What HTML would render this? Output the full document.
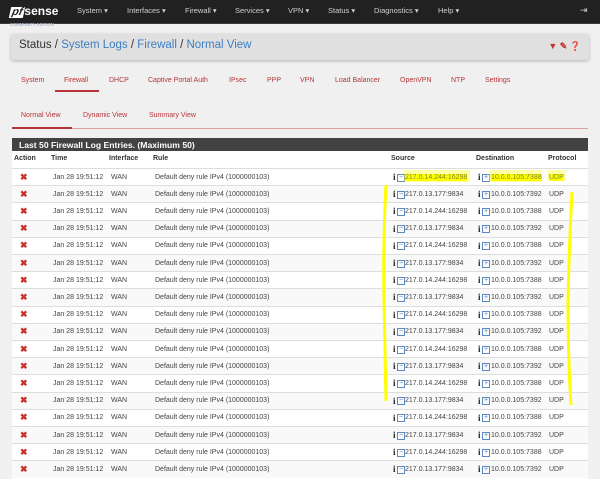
<!DOCTYPE html>
<html><head><meta charset="utf-8"><style>
*{margin:0;padding:0;box-sizing:border-box}
body{width:600px;height:479px;overflow:hidden;background:#f0f0f0;font-family:"Liberation Sans",sans-serif;position:relative}
.nav{position:absolute;left:0;top:0;width:600px;height:24px;background:#212121;border-bottom:1px solid #3a3a3a}
.nav span{position:absolute;top:6px;color:#cfcfcf;font-size:7.5px}
.logo{position:absolute;left:10px;top:2px;width:54px}
.logo b{display:inline-block;background:#fff;color:#212121;font-size:11px;font-style:italic;padding:0 2px;line-height:11px;transform:skewX(-12deg)}
.logo i{font-style:normal;color:#fff;font-weight:bold;font-size:12px;line-height:11px}
.logo small{display:block;color:#b0b8d0;font-size:4.2px;font-weight:bold;margin-top:2px;white-space:nowrap}
.bc{position:absolute;left:11px;top:34px;width:578px;height:26px;background:#e0e0e0;border-radius:3px;box-shadow:0 1px 3px rgba(0,0,0,.25);font-size:11.5px;color:#333;padding:5px 8px}
.bc a{color:#3d7fc1}
.tab{position:absolute;font-size:7px;color:#b53538}
.t1{top:77px}.t2{top:112px}
.abs{position:absolute}
.panel{position:absolute;left:12px;top:138px;width:576px;height:341px;background:#fff}
.ph{position:absolute;left:12px;top:138px;width:576px;height:13px;background:#424242;color:#fff;font-weight:bold;font-size:8.6px;padding:1.5px 7px}
.hd{position:absolute;top:155px;font-size:7px;font-weight:bold;color:#333}
.row{position:absolute;left:12px;width:576px;height:17.2px;border-top:1px solid #ddd;font-size:7px;color:#444}
.row.s{background:#f9f9f9}
.row span{position:absolute;top:4.5px}
.x{color:#c9302c;font-weight:bold;font-size:9px;top:2.5px!important;left:8px}
.ic{font-weight:bold;color:#222;font-family:"Liberation Serif",serif;font-size:9px;top:3px!important}
.bx{width:8px;height:8px;border:1px solid #5b89c4;top:4.5px!important;font-size:7px;line-height:6px;text-align:center;color:#5b89c4}
.hl{background:#ffff00}
</style></head><body>
<div class="nav">
<div class="logo"><b>pf</b><i>sense</i><small>COMMUNITY EDITION</small></div>
<span style="left:77px">System ▾</span>
<span style="left:127px">Interfaces ▾</span>
<span style="left:185px">Firewall ▾</span>
<span style="left:235px">Services ▾</span>
<span style="left:288px">VPN ▾</span>
<span style="left:328px">Status ▾</span>
<span style="left:374px">Diagnostics ▾</span>
<span style="left:438px">Help ▾</span>
<span style="left:580px;font-size:9px;top:5px">⇥</span>
</div>
<div class="bc">Status / <a>System Logs</a> / <a>Firewall</a> / <a>Normal View</a>
<span style="position:absolute;right:8px;top:7px;color:#c9302c;font-size:9px;font-weight:bold">▼ ✎ ❓</span></div>
<span class="tab t1" style="left:21px">System</span>
<span class="tab t1" style="left:64px">Firewall</span>
<div class="abs" style="left:55px;top:90px;width:44px;height:2px;background:#b53538"></div>
<span class="tab t1" style="left:109px">DHCP</span>
<span class="tab t1" style="left:148px">Captive Portal Auth</span>
<span class="tab t1" style="left:229px">IPsec</span>
<span class="tab t1" style="left:267px">PPP</span>
<span class="tab t1" style="left:300px">VPN</span>
<span class="tab t1" style="left:335px">Load Balancer</span>
<span class="tab t1" style="left:400px">OpenVPN</span>
<span class="tab t1" style="left:451px">NTP</span>
<span class="tab t1" style="left:485px">Settings</span>
<span class="tab t2" style="left:21px">Normal View</span>
<span class="tab t2" style="left:83px">Dynamic View</span>
<span class="tab t2" style="left:149px">Summary View</span>
<div class="abs" style="left:12px;top:128px;width:576px;height:1px;background:#d9a0a0"></div>
<div class="abs" style="left:12px;top:127px;width:60px;height:2px;background:#b53538"></div>
<div class="panel"></div>
<div class="ph">Last 50 Firewall Log Entries. (Maximum 50)</div>
<span class="hd" style="left:14px">Action</span>
<span class="hd" style="left:51px">Time</span>
<span class="hd" style="left:109px">Interface</span>
<span class="hd" style="left:153px">Rule</span>
<span class="hd" style="left:391px">Source</span>
<span class="hd" style="left:476px">Destination</span>
<span class="hd" style="left:548px">Protocol</span>
<div id="rows">
<div class="row" style="top:168px"><span class="x">✖</span><span style="left:41px">Jan 28 19:51:12</span><span style="left:99px">WAN</span><span style="left:143px">Default deny rule IPv4 (1000000103)</span><span class="ic" style="left:381px">i</span><span class="bx" style="left:385px">−</span><span style="left:393px" class="hl">217.0.14.244:16298</span><span class="ic" style="left:466px">i</span><span class="bx" style="left:470px">+</span><span class="hl" style="left:479px">10.0.0.105:7388</span><span class="hl" style="left:537px">UDP</span></div>
<div class="row s" style="top:185.2px"><span class="x">✖</span><span style="left:41px">Jan 28 19:51:12</span><span style="left:99px">WAN</span><span style="left:143px">Default deny rule IPv4 (1000000103)</span><span class="ic" style="left:381px">i</span><span class="bx" style="left:385px">−</span><span style="left:393px">217.0.13.177:9834</span><span class="ic" style="left:466px">i</span><span class="bx" style="left:470px">+</span><span style="left:479px">10.0.0.105:7392</span><span style="left:537px">UDP</span></div>
<div class="row" style="top:202.4px"><span class="x">✖</span><span style="left:41px">Jan 28 19:51:12</span><span style="left:99px">WAN</span><span style="left:143px">Default deny rule IPv4 (1000000103)</span><span class="ic" style="left:381px">i</span><span class="bx" style="left:385px">−</span><span style="left:393px">217.0.14.244:16298</span><span class="ic" style="left:466px">i</span><span class="bx" style="left:470px">+</span><span style="left:479px">10.0.0.105:7388</span><span style="left:537px">UDP</span></div>
<div class="row s" style="top:219.6px"><span class="x">✖</span><span style="left:41px">Jan 28 19:51:12</span><span style="left:99px">WAN</span><span style="left:143px">Default deny rule IPv4 (1000000103)</span><span class="ic" style="left:381px">i</span><span class="bx" style="left:385px">−</span><span style="left:393px">217.0.13.177:9834</span><span class="ic" style="left:466px">i</span><span class="bx" style="left:470px">+</span><span style="left:479px">10.0.0.105:7392</span><span style="left:537px">UDP</span></div>
<div class="row" style="top:236.8px"><span class="x">✖</span><span style="left:41px">Jan 28 19:51:12</span><span style="left:99px">WAN</span><span style="left:143px">Default deny rule IPv4 (1000000103)</span><span class="ic" style="left:381px">i</span><span class="bx" style="left:385px">−</span><span style="left:393px">217.0.14.244:16298</span><span class="ic" style="left:466px">i</span><span class="bx" style="left:470px">+</span><span style="left:479px">10.0.0.105:7388</span><span style="left:537px">UDP</span></div>
<div class="row s" style="top:254px"><span class="x">✖</span><span style="left:41px">Jan 28 19:51:12</span><span style="left:99px">WAN</span><span style="left:143px">Default deny rule IPv4 (1000000103)</span><span class="ic" style="left:381px">i</span><span class="bx" style="left:385px">−</span><span style="left:393px">217.0.13.177:9834</span><span class="ic" style="left:466px">i</span><span class="bx" style="left:470px">+</span><span style="left:479px">10.0.0.105:7392</span><span style="left:537px">UDP</span></div>
<div class="row" style="top:271.2px"><span class="x">✖</span><span style="left:41px">Jan 28 19:51:12</span><span style="left:99px">WAN</span><span style="left:143px">Default deny rule IPv4 (1000000103)</span><span class="ic" style="left:381px">i</span><span class="bx" style="left:385px">−</span><span style="left:393px">217.0.14.244:16298</span><span class="ic" style="left:466px">i</span><span class="bx" style="left:470px">+</span><span style="left:479px">10.0.0.105:7388</span><span style="left:537px">UDP</span></div>
<div class="row s" style="top:288.4px"><span class="x">✖</span><span style="left:41px">Jan 28 19:51:12</span><span style="left:99px">WAN</span><span style="left:143px">Default deny rule IPv4 (1000000103)</span><span class="ic" style="left:381px">i</span><span class="bx" style="left:385px">−</span><span style="left:393px">217.0.13.177:9834</span><span class="ic" style="left:466px">i</span><span class="bx" style="left:470px">+</span><span style="left:479px">10.0.0.105:7392</span><span style="left:537px">UDP</span></div>
<div class="row" style="top:305.6px"><span class="x">✖</span><span style="left:41px">Jan 28 19:51:12</span><span style="left:99px">WAN</span><span style="left:143px">Default deny rule IPv4 (1000000103)</span><span class="ic" style="left:381px">i</span><span class="bx" style="left:385px">−</span><span style="left:393px">217.0.14.244:16298</span><span class="ic" style="left:466px">i</span><span class="bx" style="left:470px">+</span><span style="left:479px">10.0.0.105:7388</span><span style="left:537px">UDP</span></div>
<div class="row s" style="top:322.8px"><span class="x">✖</span><span style="left:41px">Jan 28 19:51:12</span><span style="left:99px">WAN</span><span style="left:143px">Default deny rule IPv4 (1000000103)</span><span class="ic" style="left:381px">i</span><span class="bx" style="left:385px">−</span><span style="left:393px">217.0.13.177:9834</span><span class="ic" style="left:466px">i</span><span class="bx" style="left:470px">+</span><span style="left:479px">10.0.0.105:7392</span><span style="left:537px">UDP</span></div>
<div class="row" style="top:340px"><span class="x">✖</span><span style="left:41px">Jan 28 19:51:12</span><span style="left:99px">WAN</span><span style="left:143px">Default deny rule IPv4 (1000000103)</span><span class="ic" style="left:381px">i</span><span class="bx" style="left:385px">−</span><span style="left:393px">217.0.14.244:16298</span><span class="ic" style="left:466px">i</span><span class="bx" style="left:470px">+</span><span style="left:479px">10.0.0.105:7388</span><span style="left:537px">UDP</span></div>
<div class="row s" style="top:357.2px"><span class="x">✖</span><span style="left:41px">Jan 28 19:51:12</span><span style="left:99px">WAN</span><span style="left:143px">Default deny rule IPv4 (1000000103)</span><span class="ic" style="left:381px">i</span><span class="bx" style="left:385px">−</span><span style="left:393px">217.0.13.177:9834</span><span class="ic" style="left:466px">i</span><span class="bx" style="left:470px">+</span><span style="left:479px">10.0.0.105:7392</span><span style="left:537px">UDP</span></div>
<div class="row" style="top:374.4px"><span class="x">✖</span><span style="left:41px">Jan 28 19:51:12</span><span style="left:99px">WAN</span><span style="left:143px">Default deny rule IPv4 (1000000103)</span><span class="ic" style="left:381px">i</span><span class="bx" style="left:385px">−</span><span style="left:393px">217.0.14.244:16298</span><span class="ic" style="left:466px">i</span><span class="bx" style="left:470px">+</span><span style="left:479px">10.0.0.105:7388</span><span style="left:537px">UDP</span></div>
<div class="row s" style="top:391.6px"><span class="x">✖</span><span style="left:41px">Jan 28 19:51:12</span><span style="left:99px">WAN</span><span style="left:143px">Default deny rule IPv4 (1000000103)</span><span class="ic" style="left:381px">i</span><span class="bx" style="left:385px">−</span><span style="left:393px">217.0.13.177:9834</span><span class="ic" style="left:466px">i</span><span class="bx" style="left:470px">+</span><span style="left:479px">10.0.0.105:7392</span><span style="left:537px">UDP</span></div>
<div class="row" style="top:408.8px"><span class="x">✖</span><span style="left:41px">Jan 28 19:51:12</span><span style="left:99px">WAN</span><span style="left:143px">Default deny rule IPv4 (1000000103)</span><span class="ic" style="left:381px">i</span><span class="bx" style="left:385px">−</span><span style="left:393px">217.0.14.244:16298</span><span class="ic" style="left:466px">i</span><span class="bx" style="left:470px">+</span><span style="left:479px">10.0.0.105:7388</span><span style="left:537px">UDP</span></div>
<div class="row s" style="top:426px"><span class="x">✖</span><span style="left:41px">Jan 28 19:51:12</span><span style="left:99px">WAN</span><span style="left:143px">Default deny rule IPv4 (1000000103)</span><span class="ic" style="left:381px">i</span><span class="bx" style="left:385px">−</span><span style="left:393px">217.0.13.177:9834</span><span class="ic" style="left:466px">i</span><span class="bx" style="left:470px">+</span><span style="left:479px">10.0.0.105:7392</span><span style="left:537px">UDP</span></div>
<div class="row" style="top:443.2px"><span class="x">✖</span><span style="left:41px">Jan 28 19:51:12</span><span style="left:99px">WAN</span><span style="left:143px">Default deny rule IPv4 (1000000103)</span><span class="ic" style="left:381px">i</span><span class="bx" style="left:385px">−</span><span style="left:393px">217.0.14.244:16298</span><span class="ic" style="left:466px">i</span><span class="bx" style="left:470px">+</span><span style="left:479px">10.0.0.105:7388</span><span style="left:537px">UDP</span></div>
<div class="row s" style="top:460.4px"><span class="x">✖</span><span style="left:41px">Jan 28 19:51:12</span><span style="left:99px">WAN</span><span style="left:143px">Default deny rule IPv4 (1000000103)</span><span class="ic" style="left:381px">i</span><span class="bx" style="left:385px">−</span><span style="left:393px">217.0.13.177:9834</span><span class="ic" style="left:466px">i</span><span class="bx" style="left:470px">+</span><span style="left:479px">10.0.0.105:7392</span><span style="left:537px">UDP</span></div>
</div>
<svg class="abs" style="left:0;top:0" width="600" height="479">
<path d="M386 185 Q383 240 384 300 Q385 360 386 401" stroke="#ffff00" stroke-width="3" fill="none"/>
<path d="M572 192 Q569 250 568 300 Q568 360 571 405" stroke="#ffff00" stroke-width="3" fill="none"/>
<path d="M404 170 L470 170 L470 182 L404 182 Z M489 170 L541 170 L541 182 L489 182 Z M547 170 L566 170 L566 181 L547 181 Z" fill="#ffff00" opacity="0.35"/>
</svg>
</body></html>
